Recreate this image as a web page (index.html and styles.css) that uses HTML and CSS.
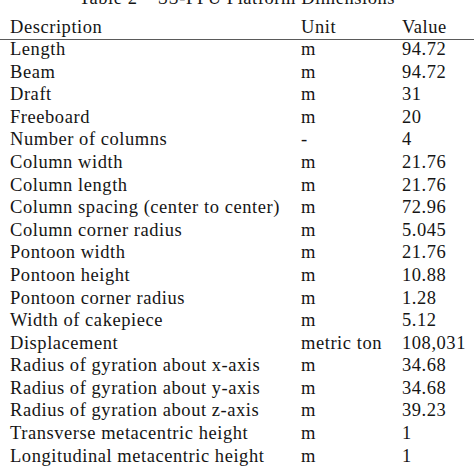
FILE: index.html
```html
<!DOCTYPE html>
<html>
<head>
<meta charset="utf-8">
<link rel="stylesheet" href="styles.css">
</head>
<body>
<div class="page">
  <div class="caption">Table 2 – SS-FPU Platform Dimensions</div>
  <div class="table">
    <div class="row head"><span>Description</span><span>Unit</span><span>Value</span></div>
    <div class="row"><span>Length</span><span>m</span><span>94.72</span></div>
    <div class="row"><span>Beam</span><span>m</span><span>94.72</span></div>
    <div class="row"><span>Draft</span><span>m</span><span>31</span></div>
    <div class="row"><span>Freeboard</span><span>m</span><span>20</span></div>
    <div class="row"><span>Number of columns</span><span>-</span><span>4</span></div>
    <div class="row"><span>Column width</span><span>m</span><span>21.76</span></div>
    <div class="row"><span>Column length</span><span>m</span><span>21.76</span></div>
    <div class="row"><span>Column spacing (center to center)</span><span>m</span><span>72.96</span></div>
    <div class="row"><span>Column corner radius</span><span>m</span><span>5.045</span></div>
    <div class="row"><span>Pontoon width</span><span>m</span><span>21.76</span></div>
    <div class="row"><span>Pontoon height</span><span>m</span><span>10.88</span></div>
    <div class="row"><span>Pontoon corner radius</span><span>m</span><span>1.28</span></div>
    <div class="row"><span>Width of cakepiece</span><span>m</span><span>5.12</span></div>
    <div class="row"><span>Displacement</span><span>metric ton</span><span>108,031</span></div>
    <div class="row"><span>Radius of gyration about x-axis</span><span>m</span><span>34.68</span></div>
    <div class="row"><span>Radius of gyration about y-axis</span><span>m</span><span>34.68</span></div>
    <div class="row"><span>Radius of gyration about z-axis</span><span>m</span><span>39.23</span></div>
    <div class="row"><span>Transverse metacentric height</span><span>m</span><span>1</span></div>
    <div class="row"><span>Longitudinal metacentric height</span><span>m</span><span>1</span></div>
  </div>
</div>
</body>
</html>
```
FILE: styles.css
```css
html, body {
  margin: 0;
  padding: 0;
  background: #ffffff;
  overflow: hidden;
}
.page {
  width: 474px;
  height: 467px;
  font-family: "Liberation Serif", "Times New Roman", serif;
  font-size: 18.5px;
  letter-spacing: 0.55px;
  color: #151515;
  display: flex;
  flex-direction: column;
}
.caption {
  line-height: 22.6px;
  margin-top: -13px;
  text-align: center;
  white-space: nowrap;
}
.table {
  margin-top: 6.9px;
  display: flex;
  flex-direction: column;
}
.row {
  display: grid;
  grid-template-columns: 291px 101px 1fr;
  padding-left: 10px;
  line-height: 22.6px;
  white-space: nowrap;
}
.row.head {
  border-bottom: 1.5px solid #5a5a5a;
  margin-bottom: -2.1px;
}
```
